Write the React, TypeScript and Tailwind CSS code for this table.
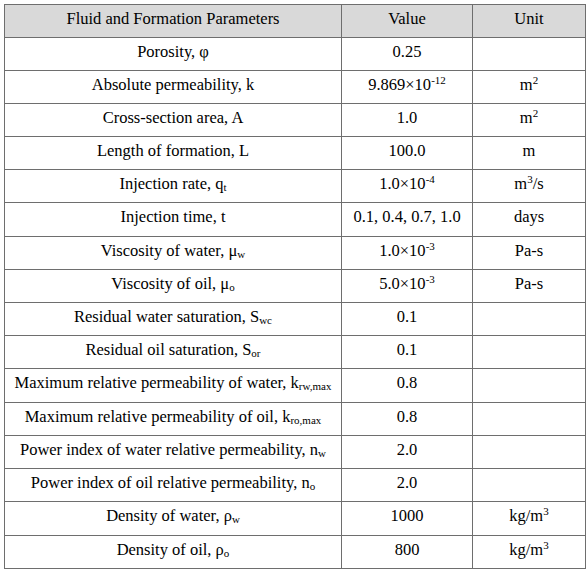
import React from "react"

type Row = { param: React.ReactNode; value: React.ReactNode; unit: React.ReactNode; h?: string }

const sub = (s: string) => <span className="text-[11px] align-[-2px] leading-none">{s}</span>
const sup = (s: string) => <span className="text-[11px] align-[6px] leading-none">{s}</span>

const ROWS: Row[] = [
  { param: <>Porosity, φ</>, value: "0.25", unit: "" },
  { param: <>Absolute permeability, k</>, value: <>9.869×10{sup("-12")}</>, unit: <>m{sup("2")}</> },
  { param: <>Cross-section area, A</>, value: "1.0", unit: <>m{sup("2")}</> },
  { param: <>Length of formation, L</>, value: "100.0", unit: "m" },
  { param: <>Injection rate, q{sub("t")}</>, value: <>1.0×10{sup("-4")}</>, unit: <>m{sup("3")}/s</> },
  { param: <>Injection time, t</>, value: "0.1, 0.4, 0.7, 1.0", unit: "days", h: "h-[34px]" },
  { param: <>Viscosity of water, μ{sub("w")}</>, value: <>1.0×10{sup("-3")}</>, unit: "Pa-s" },
  { param: <>Viscosity of oil, μ{sub("o")}</>, value: <>5.0×10{sup("-3")}</>, unit: "Pa-s" },
  { param: <>Residual water saturation, S{sub("wc")}</>, value: "0.1", unit: "" },
  { param: <>Residual oil saturation, S{sub("or")}</>, value: "0.1", unit: "" },
  { param: <>Maximum relative permeability of water, k{sub("rw,max")}</>, value: "0.8", unit: "", h: "h-[34px]" },
  { param: <>Maximum relative permeability of oil, k{sub("ro,max")}</>, value: "0.8", unit: "" },
  { param: <>Power index of water relative permeability, n{sub("w")}</>, value: "2.0", unit: "" },
  { param: <>Power index of oil relative permeability, n{sub("o")}</>, value: "2.0", unit: "" },
  { param: <>Density of water, ρ{sub("w")}</>, value: "1000", unit: <>kg/m{sup("3")}</>, h: "h-[34px]" },
  { param: <>Density of oil, ρ{sub("o")}</>, value: "800", unit: <>kg/m{sup("3")}</> },
]

const cell = "border border-[#6e6e6e] text-center align-top pt-[4px] px-1"

export default function App() {
  return (
    <div className="w-[588px] h-[573px] bg-white pl-[4px] pt-[4px] font-['Liberation_Serif',serif] text-[16.5px] leading-[20px] text-black">
      <table className="border-collapse table-fixed w-[581px] border border-[#555]">
        <colgroup>
          <col className="w-[337px]" />
          <col className="w-[131px]" />
          <col className="w-[113px]" />
        </colgroup>
        <thead>
          <tr className="h-[33px] bg-[#d9d9d9]">
            <th className={`${cell} font-normal pt-[2px]`}>Fluid and Formation Parameters</th>
            <th className={`${cell} font-normal pt-[2px]`}>Value</th>
            <th className={`${cell} font-normal pt-[2px]`}>Unit</th>
          </tr>
        </thead>
        <tbody>
          {ROWS.map((r, i) => (
            <tr key={i} className={r.h ?? "h-[33px]"}>
              <td className={cell}>{r.param}</td>
              <td className={cell}>{r.value}</td>
              <td className={cell}>{r.unit}</td>
            </tr>
          ))}
        </tbody>
      </table>
    </div>
  )
}
